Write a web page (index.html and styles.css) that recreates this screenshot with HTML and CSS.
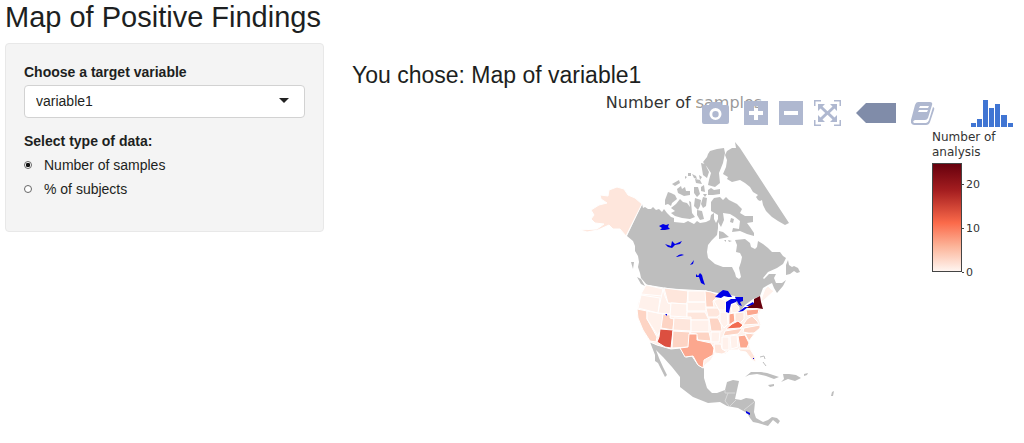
FILE: index.html
```html
<!DOCTYPE html>
<html lang="en">
<head>
  <meta charset="UTF-8">
  <title>Map of Positive Findings</title>
  <meta name="viewport" content="width=device-width, initial-scale=1.0">
  <link rel="stylesheet" href="styles.css">
</head>
<body>

  <h1>Map of Positive Findings</h1>

  <div class="layout">
    <form class="sidebar">
      <label class="control-label" for="variable">Choose a target variable</label>
      <div class="select-wrap">
        <select id="variable">
          <option value="variable1">variable1</option>
        </select>
      </div>

      <fieldset>
        <legend class="control-label">Select type of data:</legend>
        <div class="radio-row">
          <input type="radio" name="type" id="samples" checked>
          <label for="samples">Number of samples</label>
        </div>
        <div class="radio-row">
          <input type="radio" name="type" id="subjects">
          <label for="subjects">% of subjects</label>
        </div>
      </fieldset>
    </form>

    <main>
      <h3>You chose: Map of variable1</h3>

      <div class="plot">
        <p class="plot-title">Number of samples</p>

        <div class="modebar">
          <div class="group">
            <button type="button" aria-label="Download plot">
              <svg width="27" height="24" viewBox="0 0 27 24"><path fill-rule="evenodd" d="M2 4h5l1-3h11l1 3h5q2 0 2 2v15q0 2-2 2H2q-2 0-2-2V6q0-2 2-2zM13.500 7a6 6 0 1 0 0 12a6 6 0 1 0 0-12zM13.500 10a3.200 3.200 0 1 1 0 6.400a3.200 3.200 0 1 1 0-6.400z"/></svg>
            </button>
          </div>
          <div class="group">
            <button type="button" aria-label="Zoom in">
              <svg width="24" height="24" viewBox="0 0 24 24"><path fill-rule="evenodd" d="M0 0h24v24H0zM10 5v5H5v4h5v5h4v-5h5v-4h-5V5z"/></svg>
            </button>
            <button type="button" aria-label="Zoom out">
              <svg width="24" height="24" viewBox="0 0 24 24"><path fill-rule="evenodd" d="M0 0h24v24H0zM5 10v4h14v-4z"/></svg>
            </button>
            <button type="button" aria-label="Reset">
              <svg width="27" height="26" viewBox="0 0 27 26"><path d="M0 6V0h7v1.500H1.500V6zM20 0h7v6h-1.500V1.500H20zM0 20h1.500v4.500H7V26H0zM25.500 20H27v6h-7v-1.500h5.500zM4 4h7L8.500 6.500l5 4.700 5-4.700L16 4h7v7l-2.500-2.500-4.700 4.500 4.700 4.500L23 15v7h-7l2.500-2.500-5-4.700-5 4.700L11 22H4v-7l2.500 2.500 4.700-4.500-4.700-4.500L4 11z"/></svg>
            </button>
          </div>
          <div class="group">
            <button type="button" class="tag" aria-label="Show closest data on hover">
              <svg width="40" height="20" viewBox="0 0 40 20"><path d="M0 10L10 0h30v20H10z"/></svg>
            </button>
          </div>
          <div class="group">
            <button type="button" aria-label="Edit chart">
              <svg width="24" height="23" viewBox="0 0 24 23"><path fill-rule="evenodd" d="M7 0h12q3 0 2 3l-4 13q-1 2-3 2H4q-3 1-1 3h12q2 0 3-3l4-13q2 1 1 3l-4 12q-1 3-4 3H3q-4-1-3-5L4 3q1-3 3-3zM9 4l-1 2h9l1-2zM8 8l-1 2h9l1-2z"/></svg>
            </button>
          </div>
          <div class="group logo">
            <a href="#" aria-label="Produced with Plotly">
              <svg width="42" height="27" viewBox="0 0 42 27"><path d="M0 23h5v4H0zM6 19h5v8H6zM12 0h5v27h-5zM18 8h5v19h-5zM24 4h5v23h-5zM30 15h6v12h-6zM37 23h5v4h-5z"/></svg>
            </a>
          </div>
        </div>

        <div class="plot-body">
          <svg class="map" viewBox="570 130 270 300" role="img" aria-label="Map of North America">
            <g class="land">
              <!-- Canada -->
              <path d="M642 204L643 208 645 207 648 209 651 209 653 207 656 210 659 209 662 212 664 209 667 213 671 217 674 218 674 222 684 223 688 221 694 224 697 221 700 223 706 222 710 220 711 215 714 213 714 219 716 223 718 219 718 228 717 235 712 240 708 245 707 252 708 258 715 264 723 267 732 267 735 273 736 277 739 279 741 277 739 268 741 262 742 257 740 253 736 252 737 245 735 240 745 239 750 243 751 247 755 249 757 247 758 241 763 244 768 248 772 252 780 252 783 256 786 258 783 264 777 268 768 272 763 278 764 279 769 274 776 274 774 278 776 283 782 283 786 280 783 286 777 293 774 288 772 283 768 285 763 288 760 296 753 299 745 305 741 310 738 311 735 296 707 291 680 290 660 288 647 285 641 278 640 273 638 267 639 262 638 256 635 251 635 246 633 241 627 236z"/>
              <path d="M786 265L788 260 789 265 792 267 794 266 798 268 800 272 797 273 794 271 790 274 786 275z M637 277L641 279 645 286 641 284z M631 262h3l-1 7z"/>
              <!-- Greenland -->
              <path d="M735 142L740 148 789 223 785 225 778 221 772 217 766 211 763 205 762 200 760 201 758 200 756 197 758 195 753 192 750 187 745 183 740 180 732 182 727 179 728 177 723 174 726 167 727 160 725 155 727 151 732 148 736 148z"/>
              <!-- Arctic islands -->
              <path d="M708 154L710 151 717 149 724 148 725 153 723 163 719 173 720 183 715 187 708 185 709 180 711 173 707 167 703 162 707 157z M701 163L705 164 709 172 707 178 703 175z"/>
              <path d="M708 190l3-2 3 2 6-1v5l-7 1-5 0z M692 174l4 2 1 3-3-1z M695 179l5 1 2 4-6-1z M699 175l3 2-2 3z M688 173l3 0v3l-3 0z M685 176l2 1-2 2z"/>
              <path d="M672 184L679 180 680 183 675 186z M677 189l4-3 1 3 3-2 1 4 4 0 0 4-6 1-6-3z M694 187l4 0 2 7-3 3-3-4z M701 187l3-2 1 7-4-1z"/>
              <path d="M668 192L671 193 675 195 677 199 672 203 671 206 668 204 665 205 665 200z M680 199L683 202 687 203 690 207 689 201 691 202 692 213 695 217 690 219 682 218 675 216 671 213 675 211 671 208 676 204z M695 198l6 2-1 6-2 4-4-4z M703 197l4 1-1 8-3 2-2-4z M697 210l5 1 2 8-4 1-3-5z"/>
              <path d="M711 202L714 198 720 197 723 200 726 197 729 200 737 204 742 209 740 213 745 216 753 216 753 222 747 223 750 227 754 233 754 236 747 234 740 231 732 232 733 228 739 229 740 221 735 217 730 214 723 213 724 220 721 227 718 222 718 215 711 211z M719 231L723 232 729 237 724 238 719 239z M731 218l3 1-1 4-3-1z M728 240l4 1-3 1z M703 194l4 0-2 3z M724 240l2 0 0 2z"/>
              <!-- Mexico and Central America -->
              <path d="M650 342L657 345 671 349 680 348 686 357 692 356 698 365 704 368 704 378 707 388 712 393 717 393 725 390 727 382 733 380 739 381 737 390 735 399 741 400 746 398 753 399 755 402 754 412 756 418 763 422 768 420 772 417 777 418 780 421 778 424 773 420 768 426 758 423 753 422 750 418 747 413 738 408 727 406 720 402 708 403 693 397 680 387 680 377 672 367 663 357 656 350 659 358 663 367 667 375 665 377 658 363 655 361 655 355z"/>
              <path class="border" d="M725 390v3h10M728 393l-3 8 4 5M736 400l-6 6M754 402l-10 8"/>
              <!-- Caribbean -->
              <path d="M745 377l6-5 10 0 6 1 12 4-5 2-8-3-9-2-8 1z M783 374l6 0 7 1 5 3-6 3-7-2-7 3 3-3z M768 385l6-1 0 2-4 1z M804 374l4-1-1 2-3 1z M832 392l2-1-1 5-2 0z"/>
              <path class="bahamas" d="M760 357l4-1 1 3M763 362l3 4"/>
            </g>

            <g class="states">
              <path class="s2" d="M642 204L635 198 628 195 624 189 617 187 609 190 608 196 600 195 601 199 607 203 599 205 591 210 594 215 591 219 595 223 604 224 597 229 580 230 587 232 598 230 609 225 613 229 620 229 626 236z"/>
              <path class="s1" d="M646 285L670 289 707 291 716 297 730 300 738 312 747 309 761 303 762 297 765 289 768 286 771 289 774 291 762 302 762 308 758 316 761 325 755 332 749 341 750 348 755 357 755 362 747 352 740 350 730 350 726 354 715 353 711 360 705 365 704 368 698 365 692 356 686 357 680 348 671 349 657 345 650 342 643 331 637 316 638 303z"/>
              <path class="s3" d="M637 309L647 311 647 319 657 337 656 342 650 341 643 330 638 318z"/>
              <path class="s1" d="M647 311L663 314 662 329 660 330 658 336 647 319z M646 285L663 289 662 296 641 294z M641 295L660 298 658 313 638 308z"/>
              <path class="s1" d="M663 289L665 296 668 303 671 304 670 314 658 313 661 298z"/>
              <path class="s2" d="M664 288L688 291 687 304 672 303 668 303z"/>
              <path class="s1" d="M671 303l16 1v13l-17-1z M688 291h18v11h-18z M687 302h19v9h-19z"/>
              <path class="s3" d="M663 314L670 315 670 318 674 319 673 330 661 328z"/>
              <path class="s2" d="M674 318l17 1v12l-18-1z M687 312h18l4 8h-18v-3h-4z"/>
              <path class="s1" d="M691 320h18v12h-18z"/>
              <path class="s6" d="M660 329L673 330 671 348 665 347 657 342 659 337z"/>
              <path class="s3" d="M673 331l17 1-1 15-17 1z M690 332h19l2 9-13-1-2-6-6-1z"/>
              <path class="s4" d="M689 334h8v6l14 3 3 5-1 7-9 5-1 8-5-3-5-9-8 1-5-9 8-1z"/>
              <path class="s3" d="M705 291L711 292 719 295 713 301 714 307H706z"/>
              <path class="s2" d="M706 308h12l3 6-4 3h-9z"/>
              <path class="s3" d="M709 318h9l3 6 1 7h-11z"/>
              <path class="s1" d="M714 301l5-3 7 3-1 9h-6z M720 312h7l1 12-4 4-4-6z M711 332h9l-1 10h-8z M722 337h7v13h-7z M730 336l7-1 1 12-7 2z"/>
              <path class="s2" d="M714 344h7l1 5 5 3-5 2-7-1z"/>
              <path class="s1" d="M731 305l4-2 4 4 0 5-7 1z"/>
              <path class="s4" d="M729 314l5-1 1 8-6 4z"/>
              <path class="s2" d="M735 313l9-1 0 7-4 4-5-2z"/>
              <path class="s3" d="M725 331l18-3-5 6-15 2z"/>
              <path class="s5" d="M726 329L732 324 738 321 743 325 740 328z"/>
              <path class="s4" d="M746 310L759 309 758 314 747 316z M738 336L745 335 749 343 747 348 740 348z"/>
              <path class="s3" d="M745 334l6-1 4 0-6 8z M744 328l16-3 0 3-7 6-10-2z M743 325l4-6 5-3 5 5 2 3z"/>
              <path class="s2" d="M738 349h12l5 8 1 5-4-2-6-8-6-1z"/>
              <path class="s7" d="M746 308L754 303 754 299 760 296 761 302 763 309 757 308z"/>
            </g>

            <g class="lakes">
              <path d="M659 226L663 224 666 225 669 224 668 227 670 229 665 230 660 230 662 228z M665 244L671 246 672 241 675 244 682 241 680 244 675 245 672 248 668 247z M676 257q4-4 8-2l-7 2z M694 260l-1 4-3 1z M696 274l2 2 2-3 2 2 1 4 2 6-4-2-2-6-3 0z"/>
              <path d="M715 297L719 293 723 290 728 291 732 297 728 297 724 296 721 298z M726 312L726 302 731 299 738 299 736 302 731 304 730 308 729 313z M735 297L743 297 743 301 740 302 742 306 739 305 737 301z M738 312l7-5 3 0-5 4z M746 306l7-4 1 2-5 2z"/>
              <path d="M746 411l4 2 0 2-4-2z M665 314l2 0 0 2z M753 358h1v1h-1z"/>
            </g>
          </svg>

          <div class="colorbar">
            <p>Number of<br>analysis</p>
            <div class="scale">
              <div class="gradient"></div>
              <div class="ticks">
                <span>20</span>
                <span>10</span>
                <span>0</span>
              </div>
            </div>
          </div>
        </div>
      </div>
    </main>
  </div>

</body>
</html>
```
FILE: styles.css
```css
* { box-sizing: border-box; margin: 0; padding: 0; }

body {
  font-family: "Liberation Sans", Arial, sans-serif;
  font-size: 14px;
  color: #1d1f21;
  background: white;
  padding: 0 8px 0 5px;
}

h1 { font-size: 29px; line-height: 34px; font-weight: normal; }

.layout {
  display: grid;
  grid-template-columns: 319px minmax(0, 1fr);
  gap: 28px;
  align-items: start;
  margin-top: 9px;
}

.sidebar {
  background: #f4f4f4;
  border: 1px solid #e8e8e8;
  border-radius: 4px;
  padding: 18px 18px 30px;
}

.control-label {
  display: block;
  font-weight: bold;
  line-height: 20px;
}

.select-wrap { position: relative; margin: 3px 0 13px; }

.select-wrap::after {
  content: "";
  position: absolute;
  right: 16px;
  top: 13px;
  border: 5px solid transparent;
  border-top-color: #222;
  border-bottom: 0;
  pointer-events: none;
}

select {
  appearance: none;
  display: block;
  width: 100%;
  height: 33px;
  padding: 0 11px 2px;
  font: inherit;
  color: inherit;
  background: white;
  border: 1px solid #d2d2d2;
  border-radius: 4px;
}

fieldset { border: none; }

.radio-row {
  display: flex;
  align-items: center;
  gap: 12px;
  height: 24px;
}

.radio-row:first-of-type { margin-top: 2px; }

.radio-row input {
  appearance: none;
  width: 8px;
  height: 8px;
  background: white;
  border: 1px solid #666;
  border-radius: 50%;
}

.radio-row input:checked { background: radial-gradient(#111 45%, white 60%); }

h3 {
  font-size: 23px;
  line-height: 26px;
  font-weight: normal;
  margin-top: 19px;
}

.plot {
  position: relative;
  margin-top: 5px;
  font-family: "DejaVu Sans", Verdana, sans-serif;
  color: #333;
}

.plot-title {
  font-size: 16px;
  line-height: 20px;
  text-align: center;
}

.modebar {
  position: absolute;
  top: 3px;
  right: 0;
  display: flex;
  align-items: center;
  gap: 15px;
  height: 34px;
  padding: 0 3px 0 5px;
  background: rgba(255, 255, 255, 0.5);
}

.group { display: flex; align-items: center; gap: 11px; }

.modebar button, .modebar a {
  display: block;
  border: none;
  background: none;
  cursor: pointer;
}

.modebar svg { display: block; fill: #afb8d0; }
.modebar .tag svg { fill: #808ca9; }
.modebar .logo { margin-left: 21px; }
.modebar .logo svg { fill: #4075d3; }

.plot-body {
  display: flex;
  justify-content: flex-end;
  align-items: flex-start;
  gap: 92px;
  margin-top: 17px;
}

.map { width: 270px; height: 300px; }

.land path { fill: #bebebe; }
.land .border { fill: none; stroke: #d8d8d8; }
.land .bahamas { fill: none; stroke: #bebebe; }
.lakes path { fill: #0000e6; }
.states path { stroke: white; stroke-width: 1; stroke-linejoin: round; }
.states .s1 { fill: #fff1eb; }
.states .s2 { fill: #fee6dc; }
.states .s3 { fill: #fdd4c4; }
.states .s4 { fill: #fca78e; }
.states .s5 { fill: #f26c50; }
.states .s6 { fill: #dc4f40; }
.states .s7 { fill: #67000d; stroke: none; }

.colorbar { width: 84px; font-size: 12px; }
.colorbar p { line-height: 15px; white-space: nowrap; }

.scale { display: flex; margin-top: 3px; }

.gradient {
  width: 30px;
  height: 109px;
  border: 1px solid #444;
  background: linear-gradient(#67000d, #a51e20 25%, #fb6a4a 55%, #fcb499 77%, #fff5f0);
}

.ticks span {
  display: flex;
  align-items: center;
  gap: 2px;
  height: 14px;
  margin-bottom: 30px;
  font-size: 11px;
}

.ticks { padding-top: 14px; }
.ticks span::before { content: ""; width: 2px; height: 1px; background: #444; }
.ticks span:last-child { margin-bottom: 0; }
```
